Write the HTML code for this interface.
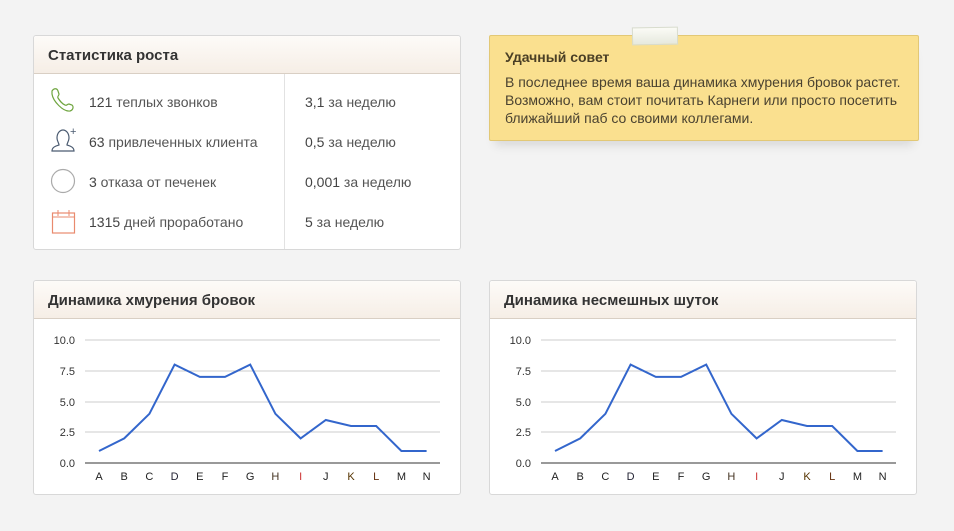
<!DOCTYPE html>
<html><head><meta charset="utf-8"><style>
body{margin:0;width:954px;height:531px;background:#f3f3f3;font-family:"Liberation Sans",sans-serif;position:relative;overflow:hidden}
.p{position:absolute;background:#fff;border:1px solid #d8d8d8;border-radius:3px;box-sizing:border-box}
.h{height:38px;border-bottom:1px solid #d9cfc4;background:linear-gradient(#fdfbf8,#f6eee6);font-weight:bold;font-size:15px;color:#333;padding:11px 0 0 14px;box-sizing:border-box;border-radius:3px 3px 0 0}
.r{position:absolute;font-size:14px;color:#555}
.r b{font-weight:normal;color:#444}
.note{position:absolute;left:489px;top:35px;width:430px;height:106px;background:#fae08f;border:1px solid #e2c876;border-radius:2px;box-sizing:border-box;box-shadow:0 10px 10px -6px rgba(0,0,0,.12)}
svg text{font-family:"Liberation Sans",sans-serif;font-size:11px}
</style></head><body>
<div class="p" style="left:33px;top:35px;width:428px;height:215px">
<div class="h">Статистика роста</div>
<div style="position:absolute;left:250px;top:38px;bottom:0;border-left:1px solid #e2e2e2"></div>
<svg style="position:absolute;left:14px;top:50px" width="30" height="150">
<path d="M4 5c2-3 5-3 6 0l1 3c0 2-2 2-1 4 2 3 4 6 7 7 2 1 2-1 4-1l3 1c2 2 1 5-2 6-7 1-17-10-18-17z" fill="none" stroke="#6fa53f" stroke-width="1.2"/>
<path d="M9 52c0-5 3-8 6-8s6 3 6 8c0 3-2 5-2 7 3 1 7 2 7 6H4c0-4 4-5 7-6 0-2-2-4-2-7z" fill="none" stroke="#4a5a70" stroke-width="1.2"/>
<text x="22" y="49" fill="#4a5a70" font-size="9">+</text>
<circle cx="15" cy="95" r="11.5" fill="none" stroke="#aaa" stroke-width="1.2"/>
<rect x="4.5" y="127" width="22" height="20" fill="none" stroke="#e98a6e" stroke-width="1.2"/>
<line x1="4.5" y1="131" x2="26.5" y2="131" stroke="#e98a6e"/><line x1="10" y1="124" x2="10" y2="130" stroke="#e98a6e"/><line x1="21" y1="124" x2="21" y2="130" stroke="#e98a6e"/>
</svg>
<div class="r" style="left:55px;top:58px"><b>121</b> теплых звонков</div>
<div class="r" style="left:55px;top:98px"><b>63</b> привлеченных клиента</div>
<div class="r" style="left:55px;top:138px"><b>3</b> отказа от печенек</div>
<div class="r" style="left:55px;top:178px"><b>1315</b> дней проработано</div>
<div class="r" style="left:271px;top:58px"><b>3,1</b> за неделю</div>
<div class="r" style="left:271px;top:98px"><b>0,5</b> за неделю</div>
<div class="r" style="left:271px;top:138px"><b>0,001</b> за неделю</div>
<div class="r" style="left:271px;top:178px"><b>5</b> за неделю</div>
</div>
<div class="note">
<div style="position:absolute;left:142px;top:-9px;width:44px;height:16px;background:linear-gradient(#fbfbf6,#e6e9de);border:1px solid #d8dccd;transform:rotate(-1deg)"></div>
<div style="position:absolute;left:15px;top:13px;font-weight:bold;font-size:14px;color:#4a3f25">Удачный совет</div>
<div style="position:absolute;left:15px;top:37px;font-size:14px;line-height:18px;color:#4a4230;white-space:nowrap">В последнее время ваша динамика хмурения бровок растет.<br>Возможно, вам стоит почитать Карнеги или просто посетить<br>ближайший паб со своими коллегами.</div>
</div>
<div class="p" style="left:33px;top:280px;width:428px;height:215px"><div class="h">Динамика хмурения бровок</div>
<svg style="position:absolute;left:-1px;top:-1px" width="428" height="215">
<g stroke="#ccc"><line x1="52" x2="407" y1="60" y2="60"/><line x1="52" x2="407" y1="91" y2="91"/><line x1="52" x2="407" y1="122" y2="122"/><line x1="52" x2="407" y1="152" y2="152"/></g>
<line x1="52" x2="407" y1="183" y2="183" stroke="#333"/>
<g text-anchor="end" fill="#333"><text x="42" y="64">10.0</text><text x="42" y="95">7.5</text><text x="42" y="126">5.0</text><text x="42" y="156">2.5</text><text x="42" y="187">0.0</text></g>
<polyline fill="none" stroke="#3366cc" stroke-width="2" points="66,171 91.2,158.4 116.4,133.8 141.6,84.6 166.8,96.9 192,96.9 217.2,84.6 242.4,133.8 267.6,158.4 292.8,140 318,146 343.2,146 368.4,171 393.6,171"/>
<g text-anchor="middle" fill="#222"><text x="66" y="200">A</text><text x="91.2" y="200">B</text><text x="116.4" y="200">C</text><text x="141.6" y="200" fill="#223">D</text><text x="166.8" y="200">E</text><text x="192" y="200">F</text><text x="217.2" y="200">G</text><text x="242.4" y="200" fill="#432">H</text><text x="267.6" y="200" fill="#c33">I</text><text x="292.8" y="200">J</text><text x="318" y="200" fill="#530">K</text><text x="343.2" y="200" fill="#631">L</text><text x="368.4" y="200">M</text><text x="393.6" y="200">N</text></g>
</svg></div>
<div class="p" style="left:489px;top:280px;width:428px;height:215px"><div class="h">Динамика несмешных шуток</div>
<svg style="position:absolute;left:-1px;top:-1px" width="428" height="215">
<g stroke="#ccc"><line x1="52" x2="407" y1="60" y2="60"/><line x1="52" x2="407" y1="91" y2="91"/><line x1="52" x2="407" y1="122" y2="122"/><line x1="52" x2="407" y1="152" y2="152"/></g>
<line x1="52" x2="407" y1="183" y2="183" stroke="#333"/>
<g text-anchor="end" fill="#333"><text x="42" y="64">10.0</text><text x="42" y="95">7.5</text><text x="42" y="126">5.0</text><text x="42" y="156">2.5</text><text x="42" y="187">0.0</text></g>
<polyline fill="none" stroke="#3366cc" stroke-width="2" points="66,171 91.2,158.4 116.4,133.8 141.6,84.6 166.8,96.9 192,96.9 217.2,84.6 242.4,133.8 267.6,158.4 292.8,140 318,146 343.2,146 368.4,171 393.6,171"/>
<g text-anchor="middle" fill="#222"><text x="66" y="200">A</text><text x="91.2" y="200">B</text><text x="116.4" y="200">C</text><text x="141.6" y="200" fill="#223">D</text><text x="166.8" y="200">E</text><text x="192" y="200">F</text><text x="217.2" y="200">G</text><text x="242.4" y="200" fill="#432">H</text><text x="267.6" y="200" fill="#c33">I</text><text x="292.8" y="200">J</text><text x="318" y="200" fill="#530">K</text><text x="343.2" y="200" fill="#631">L</text><text x="368.4" y="200">M</text><text x="393.6" y="200">N</text></g>
</svg></div>
</body></html>
